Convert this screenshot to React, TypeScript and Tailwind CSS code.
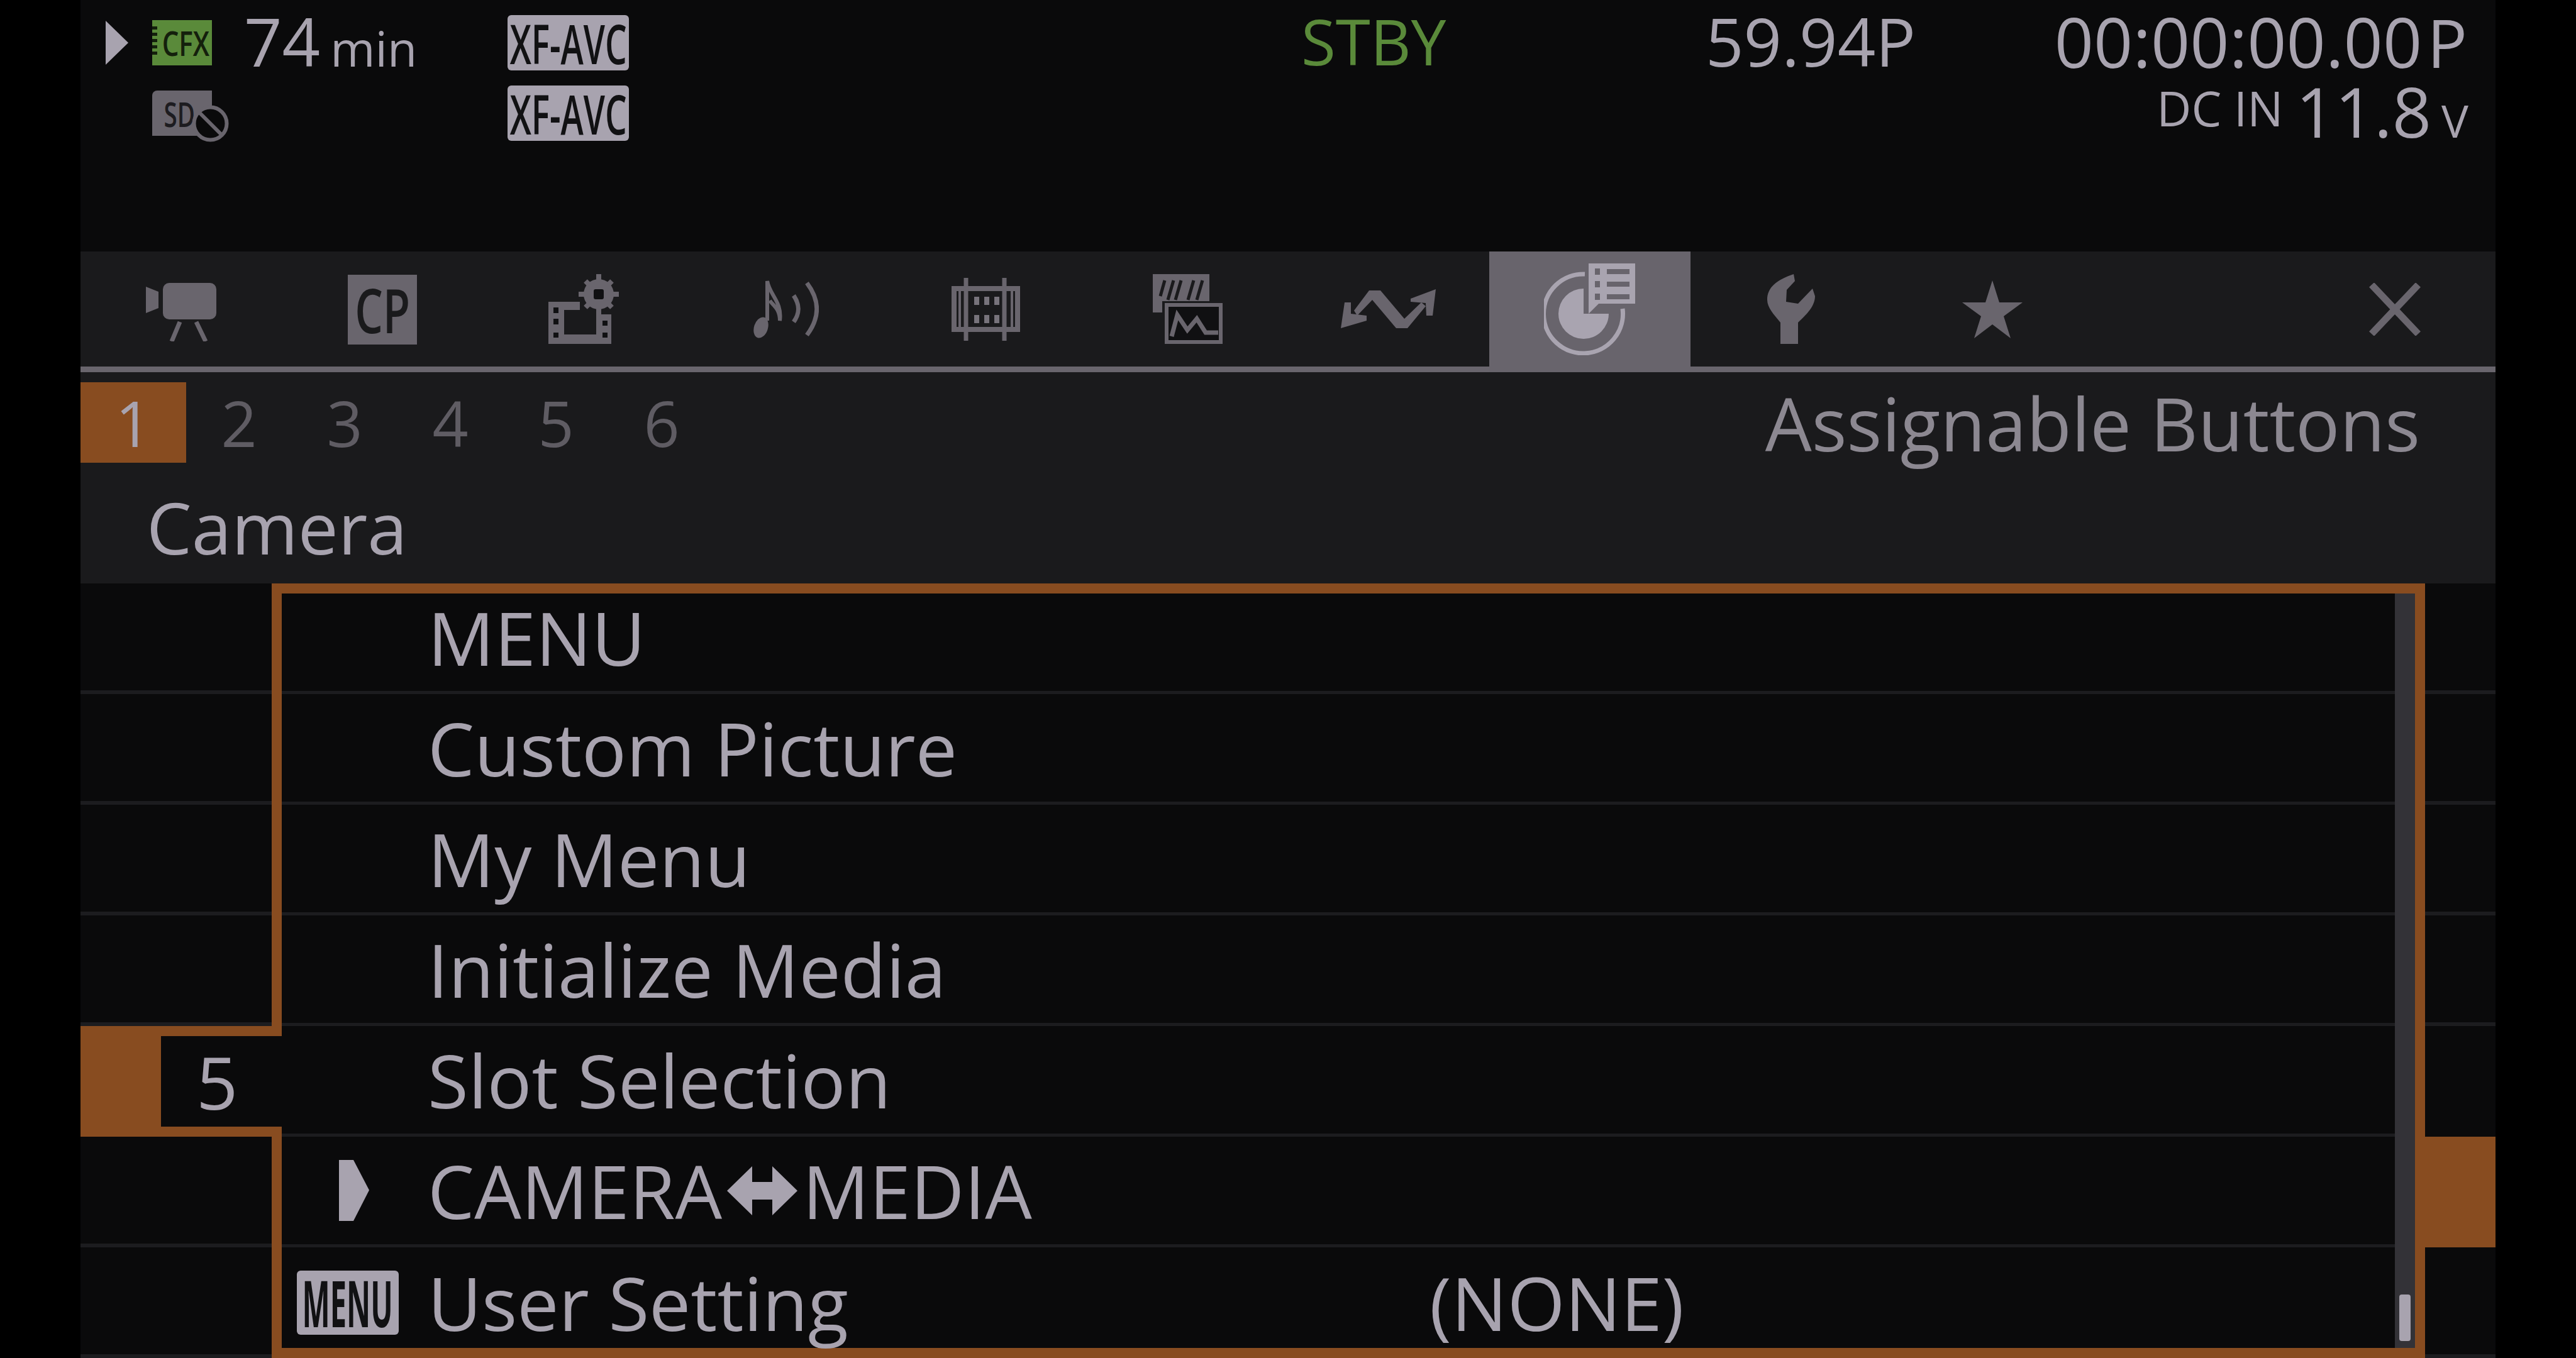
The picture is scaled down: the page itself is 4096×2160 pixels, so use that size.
import React from "react";

const font = "font-['Open_Sans',sans-serif]";

// condensed label on a filled box, like the camera's OSD glyphs
const Tag = ({ label, scale, size, className }: { label: string; scale: string; size: string; className: string }) => (
  <div className={`flex items-center justify-center ${className}`}>
    <span className={`whitespace-nowrap ${scale} ${size}`}>{label}</span>
  </div>
);

const CameraIcon = () => (
  <svg className="mt-2" width="112" height="93" viewBox="232 450 112 93" fill="#69656d">
    <path d="M232 456 L252 464 V490 L232 498 Z" />
    <rect x="259" y="450" width="85" height="58" rx="10" />
    <path d="M286 512 L273 543 M312 512 L327 543" stroke="#69656d" strokeWidth="7" fill="none" />
  </svg>
);

const FilmGearIcon = () => (
  <svg width="112" height="112" viewBox="872 436 112 112" fill="#69656d">
    <path d="M872 480 H922 V493 H897 V532 H948 V500 H972 V547 H872 Z" />
    <g fill="#101012">
      <rect x="880" y="489" width="8" height="9" />
      <rect x="880" y="507" width="8" height="9" />
      <rect x="880" y="529" width="8" height="8" />
      <rect x="958" y="510" width="8" height="8" />
      <rect x="958" y="529" width="8" height="8" />
    </g>
    <circle cx="952" cy="468" r="24" />
    <path d="M952 436 V500 M920 468 H984 M931 447 L973 489 M973 447 L931 489" stroke="#69656d" strokeWidth="8" />
    <rect x="944" y="460" width="16" height="16" rx="3" fill="#101012" />
  </svg>
);

const MusicIcon = () => (
  <svg width="108" height="92" viewBox="1194 446 108 92" fill="none" stroke="#69656d">
    <ellipse cx="1210" cy="521" rx="11" ry="17" transform="rotate(18 1210 521)" fill="#69656d" stroke="none" />
    <path d="M1220 510 V447 C1224 470 1244 480 1240 510 C1240 490 1228 485 1224 478" strokeWidth="6" />
    <path d="M1262 470 C1272 485 1272 498 1262 512" strokeWidth="7" />
    <path d="M1283 450 C1304 478 1304 505 1283 533" strokeWidth="7" />
  </svg>
);

const GridIcon = () => (
  <svg width="110" height="100" viewBox="1514 442 110 100" fill="none" stroke="#69656d">
    <rect x="1518" y="459" width="101" height="65" strokeWidth="8" />
    <path d="M1537 442 V542 M1598 442 V542" strokeWidth="7" />
    <path d="M1527 459 V524 M1610 459 V524" strokeWidth="4" />
    <path d="M1554 472 V485 M1570 472 V485 M1586 472 V485 M1554 501 V514 M1570 501 V514 M1586 501 V514" stroke="#77737b" strokeWidth="8" />
  </svg>
);

const ClapperIcon = () => (
  <svg width="111" height="112" viewBox="1833 437 111 112" fill="#69656d">
    <path d="M1833 437 H1923 V480 H1848 V498 H1833 Z" />
    <path d="M1852 447 L1845 472 M1866 447 L1857 478 M1878 447 L1869 478 M1898 447 L1889 478 M1912 447 L1903 478" stroke="#1a1a1c" strokeWidth="5" />
    <rect x="1855" y="486" width="86" height="59" fill="#101012" stroke="#69656d" strokeWidth="6" />
    <path d="M1863 536 L1872 502 L1888 526 L1903 508 L1917 530 H1937" fill="none" stroke="#69656d" strokeWidth="7" />
  </svg>
);

const ZigzagIcon = () => (
  <svg width="152" height="66" viewBox="2132 460 152 66" fill="#69656d">
    <path d="M2153 495 L2177 463 H2195 L2233 508 L2260 482 L2267 488 L2238 523 H2220 L2182 478 L2158 503 Z" />
    <path d="M2132 523 L2138 482 H2148 L2148 500 L2173 503 V511 Z" />
    <path d="M2283 461 L2278 503 H2268 L2267 483 L2243 481 V476 Z" />
  </svg>
);

const AssignIcon = () => (
  <svg width="146" height="146" viewBox="2456 420 146 146" fill="#a9a4b0">
    <path d="M2521 437 A63 63 0 1 0 2581 492" fill="none" stroke="#a9a4b0" strokeWidth="7" />
    <path d="M2519 460 A40 40 0 1 0 2559 500 H2519 Z" />
    <path d="M2527 420 H2601 V484 H2543 L2527 500 Z" />
    <g fill="#68646c">
      <rect x="2537" y="428" width="8" height="10" />
      <rect x="2537" y="448" width="8" height="10" />
      <rect x="2537" y="468" width="8" height="10" />
      <rect x="2556" y="429" width="36" height="8" />
      <rect x="2556" y="449" width="36" height="8" />
      <rect x="2556" y="469" width="36" height="8" />
    </g>
  </svg>
);

const WrenchIcon = () => (
  <svg width="76" height="112" viewBox="2811 437 76 112" fill="#69656d">
    <path d="M2853 437 C2826 446 2811 458 2811 478 C2811 492 2826 506 2832 514 V548 H2860 V514 C2870 504 2887 490 2887 472 L2883 460 L2860 484 L2841 481 L2842 462 L2855 448 Z" />
  </svg>
);

const StarIcon = () => (
  <svg width="96" height="92" viewBox="0 0 96 92" fill="#69656d">
    <path d="M48 0 L59 35 H96 L66 57 L77 92 L48 70 L19 92 L30 57 L0 35 H37 Z" />
  </svg>
);

const CloseIcon = () => (
  <svg width="82" height="84" viewBox="0 0 82 84" fill="none" stroke="#69656d" strokeWidth="11">
    <path d="M4 3 L78 81 M78 3 L4 81" />
  </svg>
);

const tabs = [
  <CameraIcon />,
  <Tag label="CP" scale="scale-x-[0.72]" size="text-[98px] font-semibold leading-none" className="w-[110px] h-[111px] bg-[#69656d] text-[#1a1a1c]" />,
  <FilmGearIcon />,
  <MusicIcon />,
  <GridIcon />,
  <ClapperIcon />,
  <ZigzagIcon />,
  <AssignIcon />,
  <WrenchIcon />,
  <StarIcon />,
];

const rows = [
  { label: "MENU", cls: "h-[160px] pb-[16px]" },
  { label: "Custom Picture", cls: "h-[176px]" },
  { label: "My Menu", cls: "h-[176px]" },
  { label: "Initialize Media", cls: "h-[176px]" },
  { label: "Slot Selection", cls: "h-[176px]" },
];

export default function App() {
  return (
    <div className={`flex h-[2160px] w-[4096px] justify-center overflow-hidden bg-black text-[#a8a3af] ${font}`}>
      <div className="flex w-[3840px] flex-col bg-[#0a0a0b]">
        {/* status area */}
        <div className="flex h-[400px] flex-col pt-3">
          <div className="flex h-[112px] items-center text-[106px] leading-none">
            <div className="w-[114px] pl-[40px]">
              <svg width="36" height="70" viewBox="0 0 36 70" fill="#a8a3af"><path d="M0 0 L36 35 L0 70 Z" /></svg>
            </div>
            <div className="w-[146px]">
              <div className="relative flex h-[72px] w-[95px] items-center justify-center bg-[#5a8a3a] pl-3 text-[#14200c]">
                <span className="scale-x-[0.78] whitespace-nowrap text-[54px] font-semibold leading-none">CFX</span>
                <div className="absolute left-0 top-2.5 flex flex-col gap-[5px]">
                  <div className="h-[5px] w-2 bg-[#14200c]" />
                  <div className="h-[5px] w-2 bg-[#14200c]" />
                  <div className="h-[5px] w-2 bg-[#14200c]" />
                  <div className="h-[5px] w-2 bg-[#14200c]" />
                  <div className="h-[5px] w-2 bg-[#14200c]" />
                </div>
              </div>
            </div>
            <div className="flex w-[419px] -translate-y-[3px] items-baseline gap-4">
              <span>74</span>
              <span className="text-[77px]">min</span>
            </div>
            <div className="w-[1262px]">
              <Tag label="XF-AVC" scale="scale-x-[0.63]" size="text-[87px] font-semibold leading-none" className="h-[88px] w-[193px] rounded-md bg-[#a8a3af] text-[#111113]" />
            </div>
            <div className="w-[643px] -translate-y-[3px] text-[100px] text-[#5a8a3a]">STBY</div>
            <div className="flex-1 -translate-y-[3px]">59.94P</div>
            <div className="flex -translate-y-[3px] items-baseline gap-2 pr-[45px] text-[109px]">
              <span>00:00:00.00</span>
              <span className="text-[106px]">P</span>
            </div>
          </div>
          <div className="flex h-[112px] items-center leading-none">
            <div className="ml-[114px] w-[565px]">
              <div className="relative h-[72px] w-[95px]">
                <Tag label="SD" scale="scale-x-[0.7]" size="text-[55px] font-semibold leading-none" className="h-[72px] w-[95px] rounded-tl-lg bg-[#69656d] pr-2 text-[#1d1c20]" />
                <svg className="absolute left-[63px] top-[21px]" width="59" height="63" viewBox="0 0 59 63" fill="#0a0a0b" stroke="#69656d" strokeWidth="6">
                  <circle cx="29.5" cy="31.5" r="26" />
                  <path d="M11 13 L48 50" />
                </svg>
              </div>
            </div>
            <Tag label="XF-AVC" scale="scale-x-[0.63]" size="text-[87px] font-semibold leading-none" className="h-[88px] w-[193px] rounded-md bg-[#a8a3af] text-[#111113]" />
            <div className="ml-auto flex -translate-y-1 items-baseline pr-[43px]">
              <span className="mr-5 -translate-y-[18px] text-[76px]">DC IN</span>
              <span className="text-[109px]">11.8</span>
              <span className="ml-4 text-[72px]">V</span>
            </div>
          </div>
        </div>

        {/* tabs */}
        <div className="flex h-[192px] border-b-[9px] border-[#69656d] bg-[#1a1a1c]">
          {tabs.map((icon, i) => (
            <div key={i} className={`flex h-[192px] w-[320px] items-center justify-center pb-[8px] ${i === 7 ? "bg-[#68646c]" : ""}`}>
              {icon}
            </div>
          ))}
          <div className="flex h-[183px] flex-1 items-center justify-end pr-[119px]">
            <CloseIcon />
          </div>
        </div>

        {/* page selector and title */}
        <div className="flex h-[336px] flex-col bg-[#1a1a1c]">
          <div className="mt-4 flex h-[128px] items-center text-[100px] leading-none text-[#5f5c63]">
            <div className="flex h-[128px] w-[168px] items-center justify-center bg-[#884c20] text-[#a8a3af]">1</div>
            <div className="w-[168px] text-center">2</div>
            <div className="w-[168px] text-center">3</div>
            <div className="w-[168px] text-center">4</div>
            <div className="w-[168px] text-center">5</div>
            <div className="w-[168px] text-center">6</div>
            <div className="ml-auto pr-[120px] text-[117px] text-[#8c8891]">Assignable Buttons</div>
          </div>
          <div className="pl-[105px] pt-[32px] text-[114px] leading-[140px]">Camera</div>
        </div>

        {/* list */}
        <div className="flex h-[1232px]">
          <div className="flex w-[304px] flex-col">
            <div className="h-[176px] border-b-[6px] border-[#1c1c1f]" />
            <div className="h-[176px] border-b-[6px] border-[#1c1c1f]" />
            <div className="h-[176px] border-b-[6px] border-[#1c1c1f]" />
            <div className="h-[176px] border-b-[6px] border-[#1c1c1f]" />
            <div className="h-[176px] bg-[#884c20] py-4 pl-[128px]">
              <div className="flex h-[144px] items-center bg-[#0a0a0b] pl-[56px] text-[116px] leading-none">5</div>
            </div>
            <div className="h-[176px] border-b-[6px] border-[#1c1c1f]" />
            <div className="h-[176px] border-b-[6px] border-[#1c1c1f]" />
          </div>

          <div className="flex h-[1232px] w-[3424px] border-16 border-[#884c20]">
            <div className="flex flex-1 flex-col text-[118px] leading-none">
              {rows.map((row, i) => (
                <div key={row.label} className={`relative flex items-center border-b-[5px] border-[#1c1c1f] pl-[232px] ${row.cls}`}>
                  {i === 4 && <div className="absolute -left-4 top-4 h-[144px] w-4 bg-[#0a0a0b]" />}
                  {row.label}
                </div>
              ))}
              <div className="flex h-[176px] items-center border-b-[5px] border-[#1c1c1f] pl-[91px]">
                <svg className="mr-[93px]" width="48" height="97" viewBox="0 0 48 97" fill="#a8a3af"><path d="M0 0 H23 L48 48 L23 97 H0 Z" /></svg>
                CAMERA
                <svg className="mx-2" width="112" height="78" viewBox="0 0 112 78" fill="#a8a3af"><path d="M0 39 L40 0 V25 H72 V0 L112 39 L72 78 V53 H40 V78 Z" /></svg>
                MEDIA
              </div>
              <div className="flex h-[160px] items-center pl-6 pt-4">
                <Tag label="MENU" scale="scale-x-[0.46]" size="text-[102px] font-bold leading-none" className="h-[102px] w-[162px] rounded-md bg-[#a8a3af] text-[#111113]" />
                <span className="ml-[46px] w-[1593px]">User Setting</span>
                <span>(NONE)</span>
              </div>
            </div>
            <div className="flex w-8 flex-col justify-end bg-[#333237] pb-[11px] pl-[7px]">
              <div className="h-[74px] w-[18px] rounded-sm bg-[#a8a3af]" />
            </div>
          </div>

          <div className="flex flex-1 flex-col">
            <div className="h-[176px] border-b-[6px] border-[#1c1c1f]" />
            <div className="h-[176px] border-b-[6px] border-[#1c1c1f]" />
            <div className="h-[176px] border-b-[6px] border-[#1c1c1f]" />
            <div className="h-[176px] border-b-[6px] border-[#1c1c1f]" />
            <div className="h-[176px]" />
            <div className="h-[176px] bg-[#884c20]" />
            <div className="h-[176px] border-b-[6px] border-[#1c1c1f]" />
          </div>
        </div>
      </div>
    </div>
  );
}
